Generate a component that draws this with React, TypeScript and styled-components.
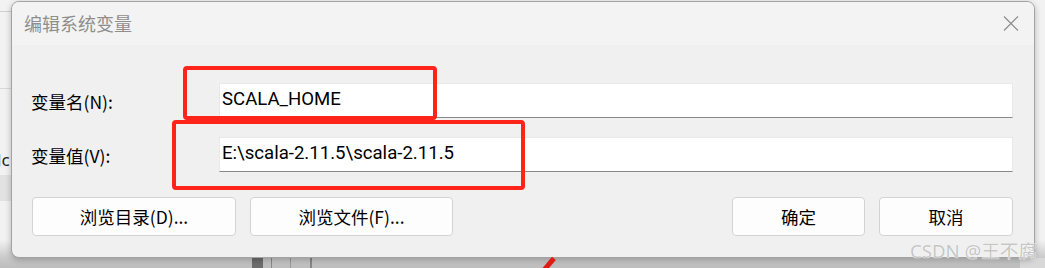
import React from "react";
import styled, { createGlobalStyle } from "styled-components";

const Global = createGlobalStyle`
  html, body { margin: 0; padding: 0; }
  body {
    width: 1045px; height: 268px; overflow: hidden;
    font-family: "Noto Sans", "Noto Sans CJK SC", sans-serif;
  }
`;

const Desktop = styled.div`
  position: relative;
  width: 1045px;
  height: 268px;
  overflow: hidden;
  background: linear-gradient(180deg, #f2f2f2 0px, #f2f2f2 240px, #c9c9c9 258px, #bdbdbd 268px);
  display: flex;
  flex-direction: column;
`;

const BackFragment = styled.div<{ $l: number; $t: number; $w: number; $h: number; $c: string }>`
  position: absolute;
  left: ${(p) => p.$l}px;
  top: ${(p) => p.$t}px;
  width: ${(p) => p.$w}px;
  height: ${(p) => p.$h}px;
  background: ${(p) => p.$c};
`;

const BackText = styled.div`
  position: absolute;
  left: -3px;
  top: 148px;
  font-size: 17px;
  color: #222;
  font-family: "Noto Sans", sans-serif;
`;

const Dialog = styled.div`
  position: relative;
  margin: 1px 0 0 11px;
  width: 1024px;
  height: 257px;
  box-sizing: border-box;
  border: 1px solid #a3a3a3;
  border-radius: 8px;
  background: #f0f0f0;
  overflow: hidden;
  box-shadow: 0 2px 6px rgba(0, 0, 0, 0.25);
  display: flex;
  flex-direction: column;
`;

const TitleBar = styled.div`
  height: 43px;
  flex: none;
  background: #f3f3f3;
  display: flex;
  align-items: center;
  justify-content: space-between;
  padding-left: 12px;
`;

const Title = styled.div`
  font-family: "Noto Sans CJK SC", sans-serif;
  font-size: 18px;
  color: #8e8e8e;
  margin-top: -1px;
`;

const CloseButton = styled.div`
  width: 46px;
  height: 43px;
  display: flex;
  align-items: center;
  justify-content: center;
`;

const Body = styled.div`
  padding: 38px 21px 0 19px;
  display: flex;
  flex-direction: column;
`;

const Field = styled.div<{ $mb: number }>`
  display: grid;
  grid-template-columns: 188px 1fr;
  align-items: center;
  height: 35px;
  margin-bottom: ${(p) => p.$mb}px;
`;

const Label = styled.div`
  font-family: "Noto Sans CJK SC", sans-serif;
  font-size: 17.5px;
  color: #000;
  margin-top: 1px;
`;

const Input = styled.div`
  height: 35px;
  box-sizing: border-box;
  background: #fff;
  border: 1px solid #e9e9e9;
  border-bottom: 1px solid #8a8a8a;
  display: flex;
  align-items: center;
  padding: 0 0 3px 2px;
  font-family: Roboto, "Noto Sans CJK SC", sans-serif;
  font-size: 18.6px;
  color: #000;
`;

const ButtonRow = styled.div`
  display: flex;
  align-items: center;
  padding-left: 1px;
  gap: 14px;
`;

const Button = styled.div<{ $w: number }>`
  width: ${(p) => p.$w}px;
  height: 39px;
  box-sizing: border-box;
  background: #fdfdfd;
  border: 1px solid #d3d3d3;
  border-radius: 4px;
  display: flex;
  align-items: center;
  justify-content: center;
  font-family: "Noto Sans CJK SC", sans-serif;
  font-size: 17.5px;
  color: #000;
  padding-bottom: 1px;
`;

const Spacer = styled.div`
  flex: 1;
`;

const Annotation = styled.div<{ $l: number; $t: number; $w: number; $h: number }>`
  position: absolute;
  left: ${(p) => p.$l}px;
  top: ${(p) => p.$t}px;
  width: ${(p) => p.$w}px;
  height: ${(p) => p.$h}px;
  box-sizing: border-box;
  border: 4px solid #ff2419;
  border-radius: 4px;
  pointer-events: none;
`;

const Slash = styled.div`
  position: absolute;
  left: 545px;
  top: 256px;
  width: 5px;
  height: 20px;
  background: #e01b12;
  transform: rotate(40deg);
`;

const Watermark = styled.div`
  position: absolute;
  left: 910px;
  top: 236px;
  font-family: "Noto Sans", "Noto Sans CJK SC", sans-serif;
  font-size: 18.6px;
  color: #c6c6c6;
  text-shadow: 0 0 1px #ffffff, 0 0 1px #ffffff;
  white-space: nowrap;
`;

export default function App() {
  return (
    <>
      <Global />
      <Desktop>
        <BackFragment $l={0} $t={11} $w={11} $h={1} $c="#d0d0d0" />
        <BackFragment $l={0} $t={88} $w={11} $h={1} $c="#d8d8d8" />
        <BackFragment $l={0} $t={175} $w={11} $h={26} $c="#e2e2e2" />
        <BackFragment $l={252} $t={258} $w={11} $h={10} $c="#6e6e6e" />
        <BackFragment $l={271} $t={258} $w={1} $h={10} $c="#8a8a8a" />
        <BackFragment $l={290} $t={258} $w={1} $h={10} $c="#9a9a9a" />
        <BackFragment $l={310} $t={258} $w={2} $h={10} $c="#888" />
        <BackFragment $l={1020} $t={258} $w={25} $h={10} $c="#d8d8d8" />
        <BackText>lc</BackText>
        <Dialog>
          <TitleBar>
            <Title>编辑系统变量</Title>
            <CloseButton>
              <svg width="16" height="15" viewBox="0 0 16 15">
                <path d="M1 0.5 L15 14.5 M15 0.5 L1 14.5" stroke="#8a8a8a" strokeWidth="1.1" fill="none" />
              </svg>
            </CloseButton>
          </TitleBar>
          <Body>
            <Field $mb={19}>
              <Label>变量名(N):</Label>
              <Input>SCALA_HOME</Input>
            </Field>
            <Field $mb={25}>
              <Label>变量值(V):</Label>
              <Input>E:\scala-2.11.5\scala-2.11.5</Input>
            </Field>
            <ButtonRow>
              <Button $w={204}>浏览目录(D)...</Button>
              <Button $w={203}>浏览文件(F)...</Button>
              <Spacer />
              <Button $w={133}>确定</Button>
              <Button $w={134}>取消</Button>
            </ButtonRow>
          </Body>
        </Dialog>
        <Annotation $l={183} $t={66} $w={254} $h={54} />
        <Annotation $l={172} $t={120} $w={353} $h={70} />
        <Slash />
        <Watermark>CSDN @王不腐</Watermark>
      </Desktop>
    </>
  );
}
